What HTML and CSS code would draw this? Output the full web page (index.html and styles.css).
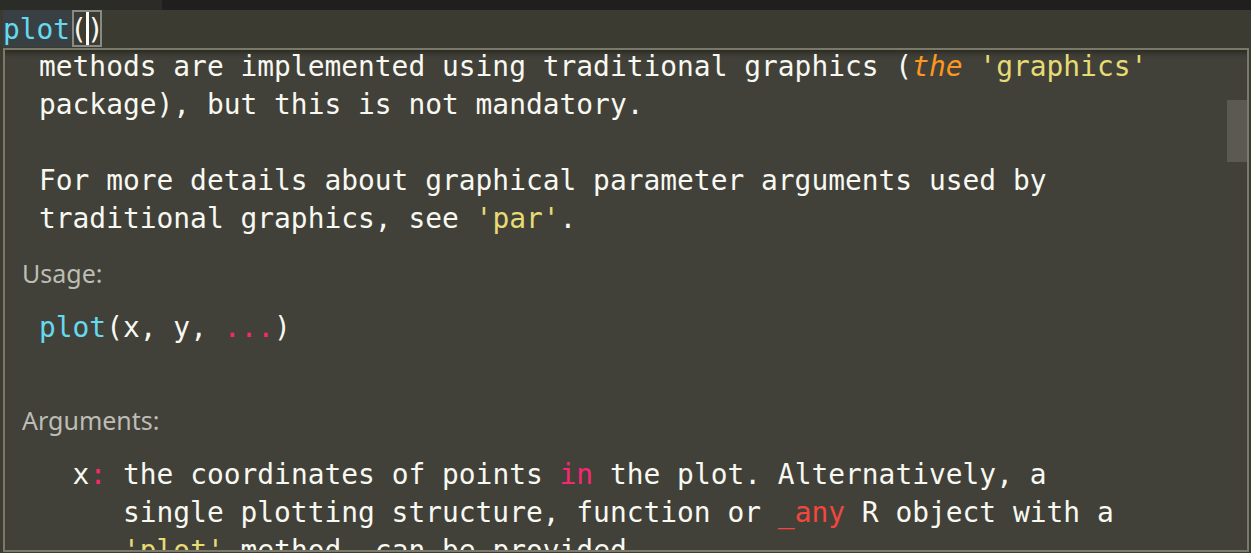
FILE: index.html
```html
<!DOCTYPE html>
<html>
	<head>
		<meta charset="utf-8">
		<title>plot</title>
		<link rel="stylesheet" href="styles.css">
	</head>
	<body>
		<div class="tabBar">
			<div class="tabLeft"></div>
		</div>
		<div class="editLine"><span class="fnHl">plot</span><span class="brackets">(<i class="cursor"></i>)</span></div>

		<div class="helpPop">
			<div class="scrollThumb"></div>
			<pre class="code first">methods are implemented using traditional graphics (<em class="orange">the</em> <span class="yellow">'graphics'</span>
package), but this is not mandatory.

For more details about graphical parameter arguments used by
traditional graphics, see <span class="yellow">'par'</span>.</pre>
			<div class="section">Usage:</div>
			<pre class="code"><span class="cyan">plot</span>(x, y, <span class="pink">...</span>)
 </pre>
			<div class="section">Arguments:</div>
			<pre class="code">  x<span class="pink">:</span> the coordinates of points <span class="pink">in</span> the plot. Alternatively, a
     single plotting structure, function or <span class="red">_any</span> R object with a
     <span class="yellow">'plot'</span> method, can be provided.</pre>
		</div>
	</body>
</html>
```

FILE: styles.css
```css
*{
	padding: 0;
	margin: 0;
}
body{
	width: 1251px;
	height: 553px;
	overflow: hidden;
	background-color: #3c3b31;
	font-family: "DejaVu Sans Mono", "Liberation Mono", monospace;
}
.tabBar{
	height: 10px;
	background-color: #1f1f1f;
}
.tabBar .tabLeft{
	width: 162px;
	height: 100%;
	background-color: #2b2b28;
}
.editLine{
	display: flex;
	height: 38px;
	padding-left: 3px;
	font-size: 27.9px;
	line-height: 40px;
	color: #f8f8f2;
}
.editLine .fnHl{
	height: 37px;
	color: #66d9ef;
	background-color: #384043;
	padding-right: 2px;
}
.editLine .brackets{
	position: relative;
	height: 37px;
	margin-left: -2px;
}
/* 括号匹配框，画在两个括号上面 */
.editLine .brackets::after{
	content: "";
	position: absolute;
	left: 2px;
	top: 0;
	width: 30px;
	height: 37px;
	border: 2px solid #8a8a85;
	box-sizing: border-box;
}
.editLine .brackets .cursor{
	position: absolute;
	left: 16px;
	top: 0;
	width: 3px;
	height: 37px;
	background-color: #fff;
}
.helpPop{
	position: relative;
	width: 1246px;
	height: 504px;
	margin-left: 3px;
	border: 2px solid #7b7968;
	box-sizing: border-box;
	background-color: #414139;
	box-shadow: inset 0 7px 6px -5px rgba(0,0,0,.45);
	overflow: hidden;
}
.scrollThumb{
	position: absolute;
	right: 0;
	top: 50px;
	width: 20px;
	height: 62px;
	background-color: #5a5a53;
}
.code{
	padding-left: 34px;
	font-family: "DejaVu Sans Mono", "Liberation Mono", monospace;
	font-size: 27.9px;
	line-height: 38px;
	color: #f8f8f2;
	white-space: pre;
}
.code.first{
	margin-top: -2px;
}
.section{
	height: 30px;
	margin: 20px 0 21px;
	padding-left: 17px;
	font-family: "Noto Sans", "Open Sans", sans-serif;
	font-size: 25px;
	line-height: 30px;
	color: #bdbdb5;
}
.cyan{
	color: #66d9ef;
}
.yellow{
	color: #e6db74;
}
.orange{
	color: #fd971f;
}
.pink{
	color: #f92672;
}
.red{
	color: #f2463e;
}
```
